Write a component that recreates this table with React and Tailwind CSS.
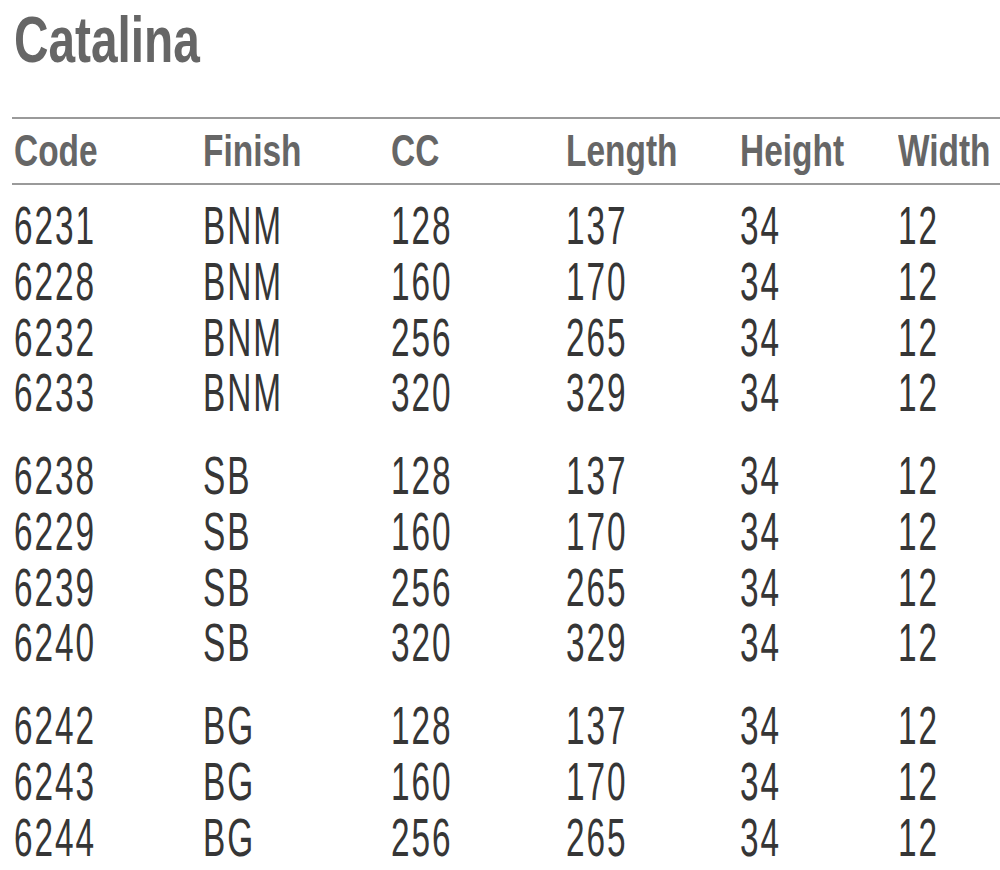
import React from 'react';

const groups = [
  [
    ['6231', 'BNM', '128', '137', '34', '12'],
    ['6228', 'BNM', '160', '170', '34', '12'],
    ['6232', 'BNM', '256', '265', '34', '12'],
    ['6233', 'BNM', '320', '329', '34', '12'],
  ],
  [
    ['6238', 'SB', '128', '137', '34', '12'],
    ['6229', 'SB', '160', '170', '34', '12'],
    ['6239', 'SB', '256', '265', '34', '12'],
    ['6240', 'SB', '320', '329', '34', '12'],
  ],
  [
    ['6242', 'BG', '128', '137', '34', '12'],
    ['6243', 'BG', '160', '170', '34', '12'],
    ['6244', 'BG', '256', '265', '34', '12'],
  ],
];

const headers = ['Code', 'Finish', 'CC', 'Length', 'Height', 'Width'];

const cols = 'grid grid-cols-[189px_188px_175px_174px_158px_1fr] pl-[2px]';

export default function App() {
  return (
    <div
      className="min-h-[870px] w-[1000px] overflow-hidden bg-white pl-[12px]"
      style={{ fontFamily: '"Liberation Sans", Arial, sans-serif' }}
    >
      <div className="h-[117px] pl-[2px] pt-[7px]">
        <h1 className="inline-block origin-left scale-x-[0.735] text-[65px] font-bold leading-[65px] text-[#666666]">
          Catalina
        </h1>
      </div>

      <div className="h-[2px] bg-[#9a9a9a]" />
      <div className={`${cols} h-[64px] items-center text-[44px] font-bold leading-none text-[#666666]`}>
        {headers.map((h) => (
          <div key={h} className="whitespace-nowrap">
            <span className="inline-block origin-left scale-x-[0.76]">{h}</span>
          </div>
        ))}
      </div>
      <div className="h-[2px] bg-[#9a9a9a]" />

      <div className="mt-[13px] flex flex-col gap-[27.4px]">
        {groups.map((rows, gi) => (
          <div key={gi}>
            {rows.map((r) => (
              <div key={r[0]} className={`${cols} h-[55.67px] items-center text-[53px] leading-none text-[#363636]`}>
                {r.map((c, i) => (
                  <div key={i} className="whitespace-nowrap">
                    <span className="inline-block origin-left scale-x-[0.63] tracking-[3px]">{c}</span>
                  </div>
                ))}
              </div>
            ))}
          </div>
        ))}
      </div>
    </div>
  );
}
